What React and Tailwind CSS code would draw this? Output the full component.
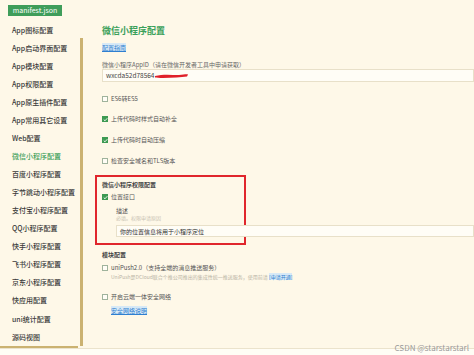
import React from "react";

const items = [
  "App图标配置",
  "App启动界面配置",
  "App模块配置",
  "App权限配置",
  "App原生插件配置",
  "App常用其它设置",
  "Web配置",
  "微信小程序配置",
  "百度小程序配置",
  "字节跳动小程序配置",
  "支付宝小程序配置",
  "QQ小程序配置",
  "快手小程序配置",
  "飞书小程序配置",
  "京东小程序配置",
  "快应用配置",
  "uni统计配置",
  "源码视图",
];

function Box({ checked }) {
  return checked ? (
    <span className="flex h-[6px] w-[6px] shrink-0 items-center justify-center bg-[#3d9a52]">
      <svg width="5" height="5" viewBox="0 0 10 10">
        <path d="M1.5 5.2 L4 7.6 L8.6 2.4" fill="none" stroke="#fff" strokeWidth="1.8" />
      </svg>
    </span>
  ) : (
    <span className="h-[6px] w-[6px] shrink-0 border border-[#9fb39c] bg-[#fffdf6]" />
  );
}

function Row({ checked, label, className = "" }) {
  return (
    <div className={"flex h-[8px] items-center gap-[3px] " + className}>
      <Box checked={checked} />
      <span className="text-[6px] leading-[8px] text-[#555]">{label}</span>
    </div>
  );
}

export default function App() {
  return (
    <div
      className="relative h-[355px] w-[474px] overflow-hidden bg-[#fef8e8]"
      style={{ fontFamily: '"Noto Sans CJK SC", "Noto Sans", sans-serif' }}
    >
      <div className="h-[20px] pl-[8px] pt-[5px]">
        <div className="flex h-[11px] w-[54px] items-center justify-center bg-[#3f9d5a] text-[7px] leading-[11px] text-white">
          manifest.json
        </div>
      </div>

      <div className="flex h-[329px] border-b border-[#ebe3cc]">
        {/* sidebar */}
        <div className="flex w-[84px] shrink-0 flex-col">
          <div className="flex flex-1">
            <div className="w-[80px] pt-[1px]">
              {items.map((t) => (
                <div
                  key={t}
                  className={
                    "flex h-[18.05px] items-center pl-[12px] text-[7px] font-medium " +
                    (t === "微信小程序配置" ? "text-[#3ea05a]" : "text-[#3b3b3b]")
                  }
                >
                  {t}
                </div>
              ))}
            </div>
            <div className="mt-[18px] w-[3px] bg-[#cbb271]" />
          </div>
          <div className="h-[3px] w-[78px] bg-[#cbb271]" />
        </div>

        {/* main */}
        <div className="flex flex-1 flex-col pl-[18px] pt-[5px]">
          <div className="text-[9px] font-semibold leading-[12px] text-[#3aa05a]">微信小程序配置</div>
          <div className="mt-[2px] leading-[8px]">
            <span className="bg-[#d7e9f6] text-[6px] text-[#2f7fd0] underline">配置指南</span>
          </div>
          <div className="mt-[9px] text-[6px] leading-[8px] text-[#666]">
            微信小程序AppID（请在微信开发者工具中申请获取）
          </div>
          <div className="relative flex h-[13px] items-center border border-[#e8e0c9] bg-[#fffdf6] pl-[3px] text-[6.5px] text-[#444]">
            wxcda52d78564
            <svg className="absolute left-[52px] top-[2px]" width="34" height="8" viewBox="0 0 34 8">
              <path d="M0 4 C8 2 16 3 24 3 C28 3 31 2 33 2.5 L32 4.5 C26 5 18 6 8 6 C4 6 2 5.5 0 5.5 Z" fill="#e0202a" />
            </svg>
          </div>

          <Row checked={false} label="ES6转ES5" className="mt-[13px]" />
          <Row checked label="上传代码时样式自动补全" className="mt-[12px]" />
          <Row checked label="上传代码时自动压缩" className="mt-[13px]" />
          <Row checked={false} label="检查安全域名和TLS版本" className="mt-[13px]" />

          <div className="-ml-[7px] mt-[10px] h-[70px] w-[151px] overflow-visible border-2 border-[#e0262c] pl-[5px] pt-[4px]">
            <div className="text-[6px] font-semibold leading-[8px] text-[#444]">微信小程序权限配置</div>
            <Row checked label="位置接口" className="mt-[4px]" />
            <div className="ml-[14px] mt-[7px] text-[6px] leading-[6px] text-[#555]">描述</div>
            <div className="ml-[14px] mt-[1px] text-[5px] leading-[6px] text-[#c9c3b3]">必填。权限申请原因</div>
            <div className="ml-[14px] mt-[4px] flex h-[12px] w-[358px] items-center border border-[#e8e0c9] bg-[#fffdf6] pl-[3px] text-[6px] text-[#333]">
              你的位置信息将用于小程序定位
            </div>
          </div>

          <div className="mt-[6px] text-[6px] font-semibold leading-[8px] text-[#444]">模块配置</div>
          <Row checked={false} label="uniPush2.0（支持全端的消息推送服务）" className="mt-[5px]" />
          <div className="ml-[9px] mt-[1px] text-[5px] leading-[8px] text-[#b9b3a4]">
            UniPush是DCloud联合个推公司推出的集成性统一推送服务，使用前请{" "}
            <span className="bg-[#d7e9f6] text-[#2f7fd0]">[申请开通]</span>
          </div>
          <Row checked={false} label="开启云端一体安全网络" className="mt-[12px]" />
          <div className="ml-[9px] mt-[1px] leading-[8px]">
            <span className="bg-[#d7e9f6] text-[6px] text-[#2f7fd0] underline">安全网络说明</span>
          </div>
        </div>
      </div>
      <div className="h-[6px] bg-[#fffdf5]" />

      <div className="absolute bottom-[2px] right-[5px] text-[8px] leading-[10px] text-[#9a9a9a]">
        CSDN @starstarstarl
      </div>
    </div>
  );
}
